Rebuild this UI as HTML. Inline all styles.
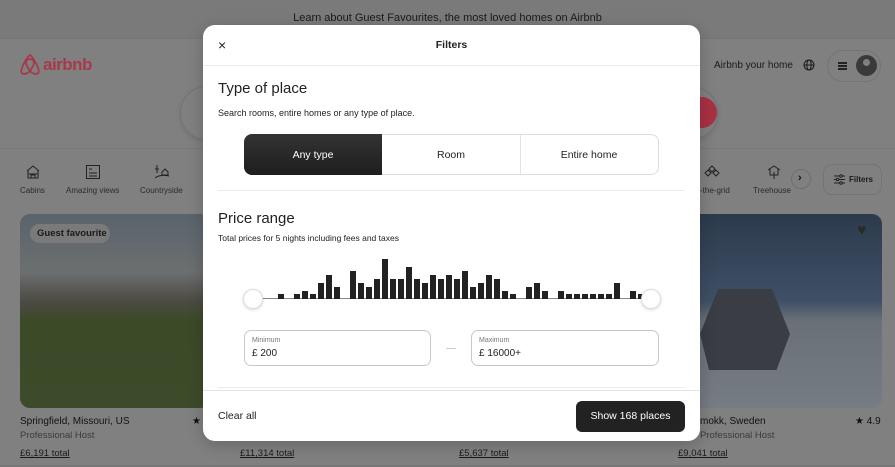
<!DOCTYPE html>
<html><head><meta charset="utf-8"><style>
*{margin:0;padding:0;box-sizing:border-box}
body{width:895px;height:467px;overflow:hidden;position:relative;background:#808080;font-family:"Liberation Sans",Arial,sans-serif;color:#111}
.a{position:absolute}
.t{position:absolute;white-space:nowrap}
.bar{position:absolute;width:6px;background:#222;bottom:168px}
</style></head><body>
<!-- background page (dimmed) -->
<div class="a" style="left:0;top:0;width:895px;height:39px;background:#7a7a7a;border-bottom:1px solid #747474"></div>
<div class="t" style="left:0;width:895px;top:12px;text-align:center;font-size:11px;color:#1a1a1a">Learn about Guest Favourites, the most loved homes on Airbnb</div>
<svg class="a" style="left:20px;top:54px" width="20" height="22" viewBox="0 0 20 22"><path d="M10 17c-2-3-4-6-4-8a4 4 0 0 1 8 0c0 2-2 5-4 8zM10 17c-3 3-7 4-8.5 1.5C0 16 6 4 10 1c4 3 10 15 8.5 17.5C17 21 13 20 10 17z" fill="none" stroke="#a63a4c" stroke-width="1.8"/></svg>
<div class="t" style="left:43px;top:55px;font-size:17px;font-weight:bold;color:#a63a4c;letter-spacing:-0.5px">airbnb</div>
<div class="t" style="left:714px;top:60px;font-size:10px;color:#1a1a1a">Airbnb your home</div>
<svg class="a" style="left:803px;top:59px" width="12" height="12" viewBox="0 0 12 12"><circle cx="6" cy="6" r="5" fill="none" stroke="#1a1a1a" stroke-width="1"/><ellipse cx="6" cy="6" rx="2.2" ry="5" fill="none" stroke="#1a1a1a"/><path d="M1 6h10" stroke="#1a1a1a"/></svg>
<div class="a" style="left:827px;top:50px;width:54px;height:32px;border:1px solid #747474;border-radius:16px"></div>
<div class="a" style="left:838px;top:62px;width:9px;height:1.5px;background:#222;box-shadow:0 3px #222,0 6px #222"></div>
<div class="a" style="left:856px;top:55px;width:21px;height:21px;border-radius:50%;background:#3a3a3a"></div>
<div class="a" style="left:863px;top:59px;width:7px;height:7px;border-radius:50%;background:#808080"></div>
<div class="a" style="left:180px;top:86px;width:538px;height:54px;border-radius:27px;background:#808080;border:1px solid #747474;box-shadow:0 2px 6px rgba(0,0,0,.1)"></div>
<div class="a" style="left:686px;top:97px;width:31px;height:31px;border-radius:50%;background:#a83144"></div>
<div class="a" style="left:0;top:148px;width:895px;height:1px;background:#777"></div>
<!-- categories -->
<svg class="a" style="left:25px;top:164px" width="16" height="16" viewBox="0 0 16 16" fill="none" stroke="#222"><path d="M2 7l6-5 6 5M3 6v8h10V6M3 10h10M6 14v-3h4v3"/></svg>
<div class="t" style="left:20px;top:186px;font-size:8px;color:#2a2a2a">Cabins</div>
<svg class="a" style="left:85px;top:164px" width="16" height="16" viewBox="0 0 16 16" fill="none" stroke="#222"><rect x="1.5" y="1.5" width="13" height="13"/><path d="M4 5h3M4 9h8M4 12h8"/></svg>
<div class="t" style="left:66px;top:186px;font-size:8px;color:#2a2a2a">Amazing views</div>
<svg class="a" style="left:154px;top:164px" width="16" height="16" viewBox="0 0 16 16" fill="none" stroke="#222"><path d="M3 1v8M1 5h4M8 8l3-3 3 3v3H8zM1 14c4-3 9-3 14-2"/></svg>
<div class="t" style="left:140px;top:186px;font-size:8px;color:#2a2a2a">Countryside</div>
<svg class="a" style="left:704px;top:164px" width="16" height="16" viewBox="0 0 16 16" fill="none" stroke="#222"><path d="M8 2l3 3-3 3-3-3zM4 6l3 3-3 3-3-3zM12 6l3 3-3 3-3-3z"/></svg>
<div class="t" style="left:700px;top:186px;font-size:8px;color:#2a2a2a">-the-grid</div>
<svg class="a" style="left:766px;top:164px" width="16" height="16" viewBox="0 0 16 16" fill="none" stroke="#222"><path d="M2 6l6-4 6 4M4 5v6h8V5M8 8v7"/></svg>
<div class="t" style="left:753px;top:186px;font-size:8px;color:#2a2a2a">Treehouse</div>
<div class="a" style="left:791px;top:169px;width:20px;height:20px;border-radius:50%;border:1px solid #6e6e6e;background:#808080"></div>
<div class="t" style="left:798px;top:172px;font-size:11px;font-weight:bold">›</div>
<div class="a" style="left:823px;top:164px;width:59px;height:31px;border:1px solid #747474;border-radius:9px"></div>
<svg class="a" style="left:834px;top:174px" width="11" height="11" viewBox="0 0 11 11" stroke="#222" fill="none"><path d="M0 2h11M0 5.5h11M0 9h11"/><circle cx="7" cy="2" r="1.3" fill="#808080"/><circle cx="3.5" cy="5.5" r="1.3" fill="#808080"/><circle cx="7" cy="9" r="1.3" fill="#808080"/></svg>
<div class="t" style="left:849px;top:175px;font-size:8px;font-weight:bold;color:#1a1a1a">Filters</div>
<!-- cards -->
<div class="a" style="left:20px;top:214px;width:190px;height:194px;border-radius:10px;overflow:hidden;background:linear-gradient(180deg,#59636d 0%,#6c6f6f 30%,#4c4a44 45%,#3c4a28 55%,#3e4b2a 100%)"></div>
<div class="a" style="left:30px;top:224px;width:80px;height:19px;border-radius:10px;background:#7a7a7a"></div>
<div class="t" style="left:37px;top:228px;font-size:9.5px;font-weight:bold;color:#1a1a1a">Guest favourite</div>
<div class="t" style="left:20px;top:416px;font-size:10px;color:#111">Springfield, Missouri, US</div>
<div class="t" style="left:192px;top:416px;font-size:10px;color:#111">★</div>
<div class="t" style="left:20px;top:430px;font-size:9.5px;color:#3a3a3a">Professional Host</div>
<div class="t" style="left:20px;top:448px;font-size:9.5px;color:#1a1a1a;text-decoration:underline">£6,191 total</div>
<div class="t" style="left:240px;top:448px;font-size:9.5px;color:#1a1a1a;text-decoration:underline">£11,314 total</div>
<div class="t" style="left:459px;top:448px;font-size:9.5px;color:#1a1a1a;text-decoration:underline">£5,637 total</div>
<div class="a" style="left:660px;top:214px;width:222px;height:194px;border-radius:10px;background:linear-gradient(180deg,#2c3a4c 0%,#3f5066 45%,#6a7078 55%,#767c84 100%)"></div>
<div class="a" style="left:700px;top:280px;width:90px;height:90px;background:#3a3e44;clip-path:polygon(20% 10%,80% 10%,100% 60%,85% 100%,10% 100%,0 60%)"></div>
<div class="t" style="left:857px;top:222px;font-size:16px;color:#2a2a2a">♥</div>
<div class="t" style="left:700px;top:416px;font-size:10px;color:#111">mokk, Sweden</div>
<div class="t" style="left:855px;top:416px;font-size:10px;color:#111">★ 4.9</div>
<div class="t" style="left:700px;top:430px;font-size:9.5px;color:#3a3a3a">Professional Host</div>
<div class="t" style="left:678px;top:448px;font-size:9.5px;color:#1a1a1a;text-decoration:underline">£9,041 total</div>
<div class="a" style="left:0;top:465px;width:895px;height:2px;background:#777"></div>
<!-- modal -->
<div class="a" style="left:203px;top:25px;width:497px;height:416px;background:#fff;border-radius:12px;box-shadow:0 4px 16px rgba(0,0,0,.2)"></div>
<div class="t" style="left:218px;top:37px;font-size:14px;color:#222">×</div>
<div class="t" style="left:203px;width:497px;top:39px;text-align:center;font-size:10.5px;font-weight:bold;color:#222">Filters</div>
<div class="a" style="left:203px;top:65px;width:497px;height:1px;background:#ebebeb"></div>
<div class="t" style="left:218px;top:80px;font-size:15px;color:#222">Type of place</div>
<div class="t" style="left:218px;top:108px;font-size:9px;color:#222">Search rooms, entire homes or any type of place.</div>
<div class="a" style="left:244px;top:134px;width:415px;height:41px;border:1px solid #ddd;border-radius:8px"></div>
<div class="a" style="left:244px;top:134px;width:138px;height:41px;border-radius:8px 0 0 8px;background:linear-gradient(#333,#1e1e1e)"></div>
<div class="a" style="left:520px;top:135px;width:1px;height:39px;background:#e4e4e4"></div>
<div class="t" style="left:244px;width:138px;top:149px;text-align:center;font-size:10.5px;color:#fff">Any type</div>
<div class="t" style="left:382px;width:138px;top:149px;text-align:center;font-size:10.5px;color:#222">Room</div>
<div class="t" style="left:520px;width:138px;top:149px;text-align:center;font-size:10.5px;color:#222">Entire home</div>
<div class="a" style="left:218px;top:190px;width:467px;height:1px;background:#ececec"></div>
<div class="t" style="left:218px;top:210px;font-size:15px;color:#222">Price range</div>
<div class="t" style="left:218px;top:233px;font-size:8.5px;color:#222">Total prices for 5 nights including fees and taxes</div>
<div class="a" style="left:262px;top:298px;width:380px;height:1px;background:#888"></div>
<div class="bar" style="left:278px;height:5px"></div><div class="bar" style="left:294px;height:5px"></div><div class="bar" style="left:302px;height:8px"></div><div class="bar" style="left:310px;height:5px"></div><div class="bar" style="left:318px;height:16px"></div><div class="bar" style="left:326px;height:24px"></div><div class="bar" style="left:334px;height:12px"></div><div class="bar" style="left:350px;height:28px"></div><div class="bar" style="left:358px;height:16px"></div><div class="bar" style="left:366px;height:12px"></div><div class="bar" style="left:374px;height:20px"></div><div class="bar" style="left:382px;height:40px"></div><div class="bar" style="left:390px;height:20px"></div><div class="bar" style="left:398px;height:20px"></div><div class="bar" style="left:406px;height:32px"></div><div class="bar" style="left:414px;height:20px"></div><div class="bar" style="left:422px;height:16px"></div><div class="bar" style="left:430px;height:24px"></div><div class="bar" style="left:438px;height:20px"></div><div class="bar" style="left:446px;height:24px"></div><div class="bar" style="left:454px;height:20px"></div><div class="bar" style="left:462px;height:28px"></div><div class="bar" style="left:470px;height:12px"></div><div class="bar" style="left:478px;height:16px"></div><div class="bar" style="left:486px;height:24px"></div><div class="bar" style="left:494px;height:20px"></div><div class="bar" style="left:502px;height:8px"></div><div class="bar" style="left:510px;height:5px"></div><div class="bar" style="left:526px;height:12px"></div><div class="bar" style="left:534px;height:16px"></div><div class="bar" style="left:542px;height:8px"></div><div class="bar" style="left:558px;height:8px"></div><div class="bar" style="left:566px;height:5px"></div><div class="bar" style="left:574px;height:5px"></div><div class="bar" style="left:582px;height:5px"></div><div class="bar" style="left:590px;height:5px"></div><div class="bar" style="left:598px;height:5px"></div><div class="bar" style="left:606px;height:5px"></div><div class="bar" style="left:614px;height:16px"></div><div class="bar" style="left:630px;height:8px"></div><div class="bar" style="left:638px;height:5px"></div>
<div class="a" style="left:243px;top:289px;width:20px;height:20px;border-radius:50%;background:#fff;border:1px solid #ddd;box-shadow:0 1px 3px rgba(0,0,0,.15)"></div>
<div class="a" style="left:641px;top:289px;width:20px;height:20px;border-radius:50%;background:#fff;border:1px solid #ddd;box-shadow:0 1px 3px rgba(0,0,0,.15)"></div>
<div class="a" style="left:244px;top:330px;width:187px;height:36px;border:1px solid #c8c8c8;border-radius:7px"></div>
<div class="t" style="left:252px;top:337px;font-size:7px;color:#777">Minimum</div>
<div class="t" style="left:252px;top:348px;font-size:10px;color:#222">£ 200</div>
<div class="a" style="left:446px;top:348px;width:10px;height:1px;background:#ccc"></div>
<div class="a" style="left:471px;top:330px;width:188px;height:36px;border:1px solid #c8c8c8;border-radius:7px"></div>
<div class="t" style="left:479px;top:337px;font-size:7px;color:#777">Maximum</div>
<div class="t" style="left:479px;top:348px;font-size:10px;color:#222">£ 16000+</div>
<div class="a" style="left:218px;top:387px;width:467px;height:1px;background:#ececec"></div>
<div class="a" style="left:203px;top:390px;width:497px;height:1px;background:#e4e4e4"></div>
<div class="t" style="left:218px;top:410px;font-size:10.5px;color:#222">Clear all</div>
<div class="a" style="left:576px;top:401px;width:109px;height:31px;border-radius:6px;background:#222"></div>
<div class="t" style="left:576px;width:109px;top:410px;text-align:center;font-size:10.5px;color:#fff">Show 168 places</div>
</body></html>
